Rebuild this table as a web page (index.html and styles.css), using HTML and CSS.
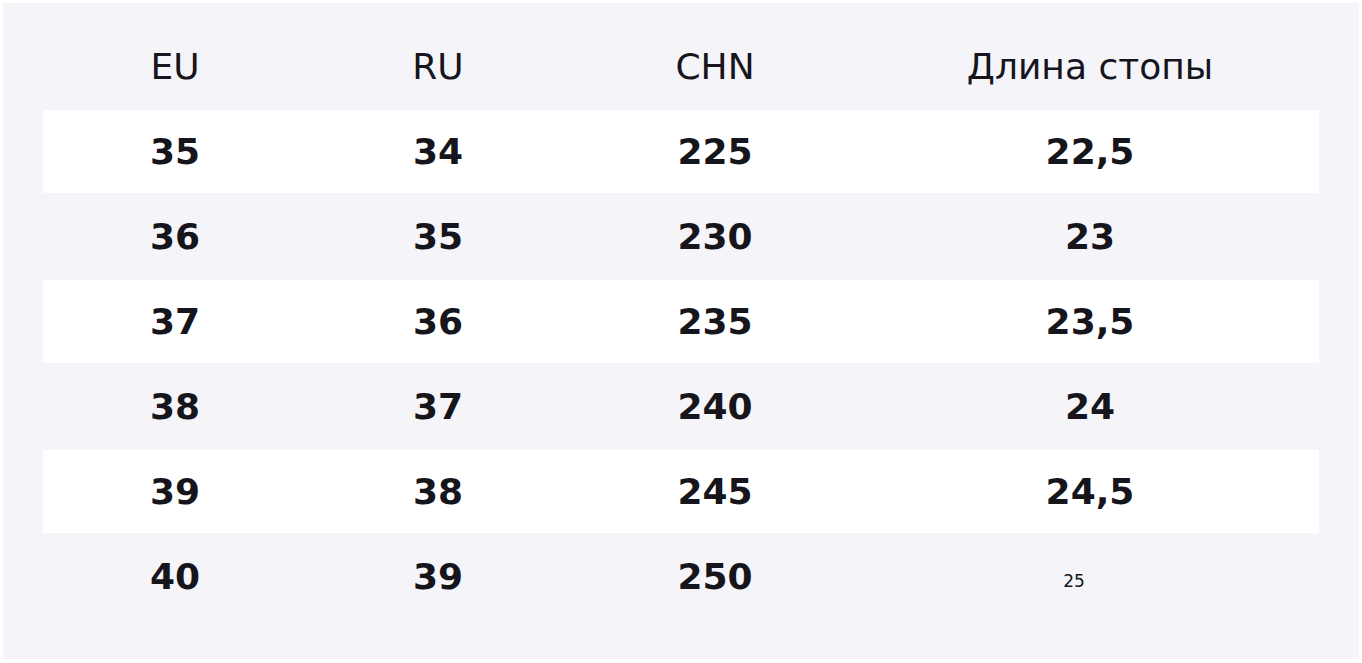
FILE: index.html
```html
<!DOCTYPE html>
<html lang="ru">
<head>
<meta charset="utf-8">
<title>Таблица размеров</title>
<link rel="stylesheet" href="styles.css">
</head>
<body>
<div class="panel">
  <table class="sizes">
    <colgroup>
      <col class="c1"><col class="c2"><col class="c3"><col class="c4">
    </colgroup>
    <thead>
      <tr><th>EU</th><th>RU</th><th>CHN</th><th>Длина стопы</th></tr>
    </thead>
    <tbody>
      <tr class="light"><td>35</td><td>34</td><td>225</td><td>22,5</td></tr>
      <tr><td>36</td><td>35</td><td>230</td><td>23</td></tr>
      <tr class="light"><td>37</td><td>36</td><td>235</td><td>23,5</td></tr>
      <tr><td>38</td><td>37</td><td>240</td><td>24</td></tr>
      <tr class="light"><td>39</td><td>38</td><td>245</td><td>24,5</td></tr>
      <tr><td>40</td><td>39</td><td>250</td><td><span class="small">25</span></td></tr>
    </tbody>
  </table>
</div>
</body>
</html>
```
FILE: styles.css
```css
html, body {
  background: #ffffff;
}
body {
  margin: 3px;
  font-family: "DejaVu Sans", "Noto Sans", sans-serif;
  color: #15151b;
}
.panel {
  background: #f4f4f9;
  height: 656px;
  box-sizing: border-box;
  padding: 20px 40px 39px;
}
.sizes {
  width: 100%;
  table-layout: fixed;
  border-collapse: separate;
  border-spacing: 0 2px;
}
.c1 { width: 264px; }
.c2 { width: 262px; }
.c3 { width: 292px; }
.c4 { width: 458px; }
.sizes th,
.sizes td {
  height: 83px;
  padding: 0;
  text-align: center;
  vertical-align: middle;
  font-size: 36px;
  line-height: 42px;
}
.sizes th {
  font-weight: normal;
}
.sizes td {
  font-weight: bold;
}
.light td {
  background: #ffffff;
}
.small {
  font-size: 17px;
  font-weight: normal;
  margin-right: 32px;
  vertical-align: -3px;
}
```
